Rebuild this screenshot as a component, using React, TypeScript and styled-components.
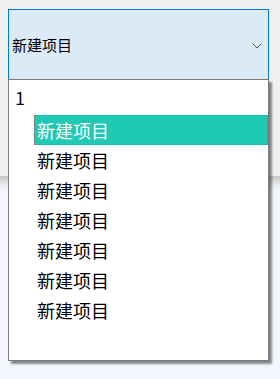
import styled, { createGlobalStyle } from 'styled-components';

const GlobalStyle = createGlobalStyle`
  html, body {
    margin: 0;
    padding: 0;
  }
  body {
    font-family: "Noto Sans CJK SC", "Noto Sans", sans-serif;
    color: #000;
  }
`;

const options = ['新建项目', '新建项目', '新建项目', '新建项目', '新建项目', '新建项目', '新建项目'];

const App = () => {
  return (
    <Page>
      <GlobalStyle />
      <TopBand>
        <SelectWrap>
          <SelectBox>
            <SelectText>新建项目</SelectText>
            <Chevron width="10" height="6" viewBox="0 0 10 6">
              <path d="M0.5 0.5 L5 5 L9.5 0.5" fill="none" stroke="#5a5a5a" strokeWidth="1" />
            </Chevron>
          </SelectBox>
          <Dropdown>
            <GroupLabel>1</GroupLabel>
            <OptionList>
              {options.map((label, i) => (
                <Option key={i} $active={i === 0}>
                  {label}
                </Option>
              ))}
            </OptionList>
          </Dropdown>
        </SelectWrap>
      </TopBand>
      <Lower />
    </Page>
  );
};

export default App;

const Page = styled.div`
  display: flex;
  flex-direction: column;
  min-height: 379px;
  width: 280px;
`;

const TopBand = styled.div`
  height: 176px;
  box-sizing: border-box;
  padding: 9px 11px 0 8px;
  background: #f0f0f0;
`;

const Lower = styled.div`
  flex: 1;
  background: linear-gradient(#c6c6c6 0px, #eceef2 10px, #f3f6fc 16px);
`;

const SelectWrap = styled.div`
  position: relative;
  width: 261px;
`;

const SelectBox = styled.div`
  box-sizing: border-box;
  height: 71px;
  display: flex;
  align-items: center;
  justify-content: space-between;
  padding: 0 6px 0 3px;
  border: 1px solid #0078d7;
  background: #dbeaf7;
`;

const SelectText = styled.span`
  font-size: 15px;
  line-height: 20px;
  margin-top: 1px;
`;

const Chevron = styled.svg`
  display: block;
  margin-top: 2px;
`;

const Dropdown = styled.div`
  position: absolute;
  top: 70px;
  left: 0;
  width: 261px;
  height: 282px;
  box-sizing: border-box;
  border: 1px solid #7a7a7a;
  background: #fff;
  box-shadow: 3px 3px 2px rgba(0, 0, 0, 0.45);
`;

const GroupLabel = styled.div`
  height: 35px;
  line-height: 35px;
  padding-left: 6px;
  font-size: 18px;
  color: #0b0b20;
`;

const OptionList = styled.div`
  display: flex;
  flex-direction: column;
  padding-left: 25px;
`;

const Option = styled.div<{ $active?: boolean }>`
  box-sizing: border-box;
  height: 30px;
  line-height: 28px;
  padding-left: 2px;
  font-size: 18px;
  white-space: nowrap;
  color: ${(p) => (p.$active ? '#fff' : '#000')};
  background: ${(p) => (p.$active ? '#20c9b3' : 'transparent')};
  border: 1px dotted ${(p) => (p.$active ? '#f04848' : 'transparent')};
`;
